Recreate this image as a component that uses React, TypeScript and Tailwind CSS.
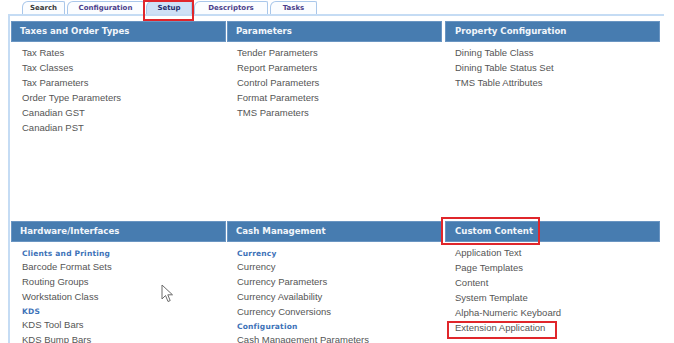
import type { ReactNode } from "react";

type Entry = { label: string; sub?: boolean };

const tabs = [
  { label: "Search", width: "w-[43px]", tone: "text-[#3a3a3a]" },
  { label: "Configuration", width: "w-[77px]", tone: "text-[#4b3f8c]" },
  { label: "Setup", width: "w-[46px]", tone: "text-[#1f2d6b]", active: true },
  { label: "Descriptors", width: "w-[74px]", tone: "text-[#4b3f8c]" },
  { label: "Tasks", width: "w-[47px]", tone: "text-[#4b3f8c]" },
];

const topColumns: { title: string; items: Entry[] }[] = [
  {
    title: "Taxes and Order Types",
    items: [
      { label: "Tax Rates" },
      { label: "Tax Classes" },
      { label: "Tax Parameters" },
      { label: "Order Type Parameters" },
      { label: "Canadian GST" },
      { label: "Canadian PST" },
    ],
  },
  {
    title: "Parameters",
    items: [
      { label: "Tender Parameters" },
      { label: "Report Parameters" },
      { label: "Control Parameters" },
      { label: "Format Parameters" },
      { label: "TMS Parameters" },
    ],
  },
  {
    title: "Property Configuration",
    items: [
      { label: "Dining Table Class" },
      { label: "Dining Table Status Set" },
      { label: "TMS Table Attributes" },
    ],
  },
];

const bottomColumns: { title: string; items: Entry[]; offset: string }[] = [
  {
    title: "Hardware/Interfaces",
    offset: "pt-[6px]",
    items: [
      { label: "Clients and Printing", sub: true },
      { label: "Barcode Format Sets" },
      { label: "Routing Groups" },
      { label: "Workstation Class" },
      { label: "KDS", sub: true },
      { label: "KDS Tool Bars" },
      { label: "KDS Bump Bars" },
    ],
  },
  {
    title: "Cash Management",
    offset: "pt-[6px]",
    items: [
      { label: "Currency", sub: true },
      { label: "Currency" },
      { label: "Currency Parameters" },
      { label: "Currency Availability" },
      { label: "Currency Conversions" },
      { label: "Configuration", sub: true },
      { label: "Cash Management Parameters" },
    ],
  },
  {
    title: "Custom Content",
    offset: "pt-[4px]",
    items: [
      { label: "Application Text" },
      { label: "Page Templates" },
      { label: "Content" },
      { label: "System Template" },
      { label: "Alpha-Numeric Keyboard" },
      { label: "Extension Application" },
    ],
  },
];

const colWidths = ["w-[215px]", "w-[215px]", "w-[215px]"];
const colGaps = ["", "ml-px", "ml-[3px]"];

function Header({ children, index }: { children: ReactNode; index: number }) {
  return (
    <div
      className={`flex h-[21px] items-center bg-[#477cb0] font-['DejaVu_Sans',sans-serif] text-[8.6px] font-bold text-[#f2f6fb] shadow-[inset_0_0_0_1px_#6a95c2] ${
        index === 2 ? "pl-[10px]" : "pl-[9px]"
      }`}
    >
      {children}
    </div>
  );
}

function Item({ entry, first }: { entry: Entry; first: boolean }) {
  if (entry.sub) {
    return (
      <div
        className={`flex items-center font-['DejaVu_Sans',sans-serif] text-[7.5px] font-bold tracking-[0.2px] text-[#3d72b8] ${
          first ? "h-[12px]" : "h-[13px]"
        }`}
      >
        {entry.label}
      </div>
    );
  }
  return (
    <div className="flex h-[15px] items-center font-['Liberation_Sans',Arial,sans-serif] text-[9.5px] text-[#555]">
      {entry.label}
    </div>
  );
}

function Column({
  title,
  items,
  index,
  offset,
  height,
}: {
  title: string;
  items: Entry[];
  index: number;
  offset: string;
  height: string;
}) {
  return (
    <div className={`${colWidths[index]} ${colGaps[index]} ${height} flex flex-col`}>
      <Header index={index}>{title}</Header>
      <div className={`${offset} ${index === 0 ? "pl-[11px]" : "pl-[10px]"}`}>
        {items.map((entry, i) => (
          <Item entry={entry} first={i === 0} key={`${entry.label}-${i}`} />
        ))}
      </div>
    </div>
  );
}

function Cursor() {
  return (
    <svg
      className="absolute left-[161px] top-[284px]"
      width="13"
      height="19"
      viewBox="0 0 13 19"
    >
      <path
        d="M1 1 L1 15 L4.5 11.5 L7 17.5 L9.2 16.6 L6.8 10.8 L11.5 10.8 Z"
        fill="#fff"
        stroke="#6b6b6b"
        strokeWidth="1"
        strokeLinejoin="round"
      />
    </svg>
  );
}

export default function App() {
  return (
    <div className="relative h-[343px] w-[674px] overflow-hidden bg-white">
      <div className="flex h-[14px] items-end gap-[2px] pl-[22px]">
        {tabs.map((tab) => (
          <div
            className={`${tab.width} flex h-[13px] items-center justify-center rounded-tl-[6px] rounded-tr-[2px] border border-b-0 border-[#a9c7ea] font-['DejaVu_Sans',sans-serif] text-[7px] font-semibold ${tab.tone} ${
              tab.active ? "bg-[#cfe1f6] font-bold" : "bg-[#fbfdff]"
            }`}
            key={tab.label}
          >
            {tab.label}
          </div>
        ))}
      </div>

      <div className="ml-[8px] mr-[10px] h-[329px] border-l-2 border-t-2 border-[#c5dcf4] pl-px pt-[5px]">
        <div className="flex">
          {topColumns.map((col, index) => (
            <Column
              height="h-[200px]"
              index={index}
              items={col.items}
              key={col.title}
              offset="pt-[4px]"
              title={col.title}
            />
          ))}
        </div>
        <div className="flex">
          {bottomColumns.map((col, index) => (
            <Column
              height="h-[130px]"
              index={index}
              items={col.items}
              key={col.title}
              offset={col.offset}
              title={col.title}
            />
          ))}
        </div>
      </div>

      <div className="absolute left-[143px] top-0 h-[21px] w-[51px] border-2 border-[#e0262b]" />
      <div className="absolute left-[441px] top-[217px] h-[28px] w-[99px] border-2 border-[#e0262b]" />
      <div className="absolute left-[447px] top-[321px] h-[18px] w-[110px] border-2 border-[#e0262b]" />
      <Cursor />
    </div>
  );
}
